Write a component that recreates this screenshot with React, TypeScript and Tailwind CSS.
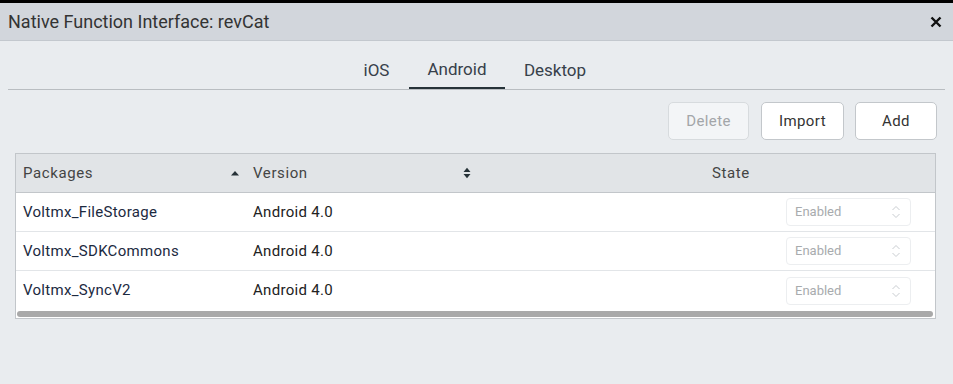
import React from "react";

const rows = ["Voltmx_FileStorage", "Voltmx_SDKCommons", "Voltmx_SyncV2"];

function Chevrons() {
  return (
    <svg width="10" height="16" viewBox="0 0 10 16" fill="none" stroke="#c9cdd1" strokeWidth="1">
      <path d="M1.5 6 L5 2.5 L8.5 6" />
      <path d="M1.5 10 L5 13.5 L8.5 10" />
    </svg>
  );
}

export default function App() {
  return (
    <div
      className="w-[953px] h-[384px] bg-[#e9ecef] flex flex-col overflow-hidden"
      style={{ fontFamily: "Roboto, 'Noto Sans', sans-serif" }}
    >
      <div className="h-[3px] bg-black shrink-0" />
      <div className="h-[38px] shrink-0 bg-[#d2d6dc] border-b border-[#c3c8ce] flex items-center justify-between pl-[8px] pr-[10px]">
        <span className="text-[18px] text-[#333]">Native Function Interface: revCat</span>
        <svg width="12" height="12" viewBox="0 0 12 12" className="mr-[1px]">
          <path d="M1.5 1.5 L10.5 10.5 M10.5 1.5 L1.5 10.5" stroke="#111" strokeWidth="2.4" />
        </svg>
      </div>
      <div className="px-[8px] pt-[16px]">
        <div className="flex justify-start pl-[336px] border-b border-[#b9bdc1] h-[33px]">
          <div className="w-[65px] flex justify-center items-start pt-[1px] text-[17px] text-[#37404a]">iOS</div>
          <div className="w-[96px] flex justify-center items-start text-[17px] text-[#37404a] border-b-2 border-[#263238] h-[32px]">Android</div>
          <div className="w-[100px] flex justify-center items-start pt-[1px] text-[17px] text-[#37404a]">Desktop</div>
        </div>
      </div>
      <div className="flex justify-end pr-[16px] pt-[12px]">
        <button className="w-[81px] h-[38px] mr-[12px] rounded-[5px] border border-[#d7dbde] bg-[#f3f5f7] text-[15px] tracking-[0.4px] text-[#a3a6a9]">Delete</button>
        <button className="w-[83px] h-[38px] mr-[11px] rounded-[5px] border border-[#c3c7cb] bg-white text-[15px] tracking-[0.4px] text-[#333]">Import</button>
        <button className="w-[82px] h-[38px] rounded-[5px] border border-[#c3c7cb] bg-white text-[15px] tracking-[0.4px] text-[#333]">Add</button>
      </div>
      <div className="mx-[15px] mt-[13px] w-[921px] border border-[#c2c6ca] bg-white">
        <div className="grid grid-cols-[229px_231px_1fr] h-[39px] bg-[#e1e4e7] border-b border-[#c2c6ca] text-[15px] text-[#444] tracking-[0.6px]">
          <div className="flex items-center justify-between pl-[7px] pr-[5px]">
            <span>Packages</span>
            <svg width="10" height="6" viewBox="0 0 10 6"><path d="M1 5.5 L5 1 L9 5.5 Z" fill="#263238" /></svg>
          </div>
          <div className="flex items-center justify-between pl-[8px] pr-[5px]">
            <span>Version</span>
            <svg width="8" height="12" viewBox="0 0 8 12"><path d="M0.5 5 L4 0.8 L7.5 5 Z M0.5 7 L4 11.2 L7.5 7 Z" fill="#263238" /></svg>
          </div>
          <div className="flex items-center pl-[236px]">
            <span>State</span>
          </div>
        </div>
        {rows.map((r, i) => (
          <div
            key={r}
            className={`grid grid-cols-[229px_231px_1fr] h-[39px] text-[15px] tracking-[0.3px] ${i < rows.length - 1 ? "border-b border-[#e2e5e8]" : ""}`}
          >
            <div className="flex items-center pl-[7px] text-[#1c2a3f]">{r}</div>
            <div className="flex items-center pl-[8px] text-[#222]">Android 4.0</div>
            <div className="flex items-center justify-end pr-[24px]">
              <div className="w-[125px] h-[28px] rounded-[4px] border border-[#eceef0] flex items-center justify-between pl-[8px] pr-[9px] text-[13px] tracking-normal text-[#a8abae]">
                <span>Enabled</span>
                <Chevrons />
              </div>
            </div>
          </div>
        ))}
        <div className="h-[8px] flex items-center px-[1px] pb-[1px]">
          <div className="h-[6px] w-[916px] rounded-full bg-[#a9a9a9]" />
        </div>
      </div>
    </div>
  );
}
